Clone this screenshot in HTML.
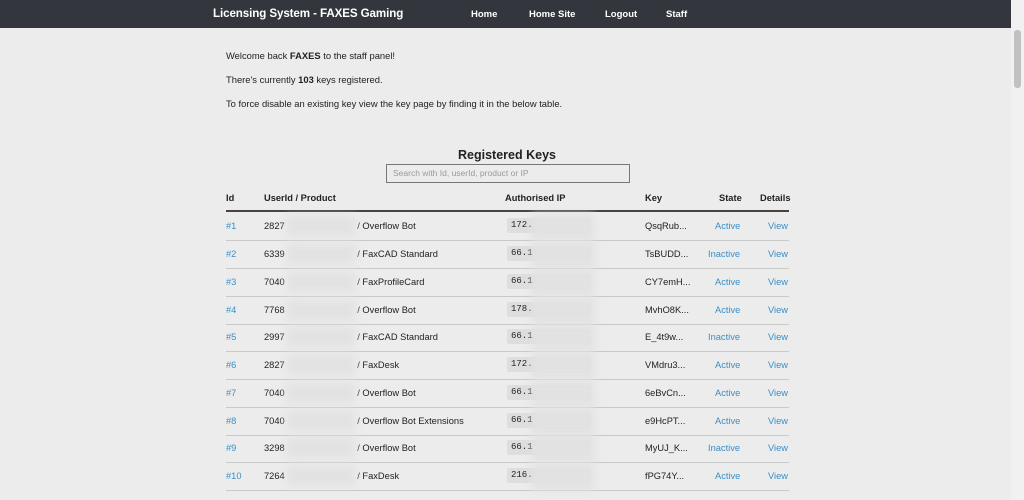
<!DOCTYPE html>
<html><head><style>
body{margin:0;width:1024px;height:500px;overflow:hidden;background:#ececec;font-family:"Liberation Sans",sans-serif;color:#222;font-size:9.3px;position:relative}
.nav{position:absolute;left:0;top:0;width:1011px;height:28px;background:#33373d;color:#fff}
.nav .t{position:absolute;left:213px;top:7px;font-size:11.6px;font-weight:bold;letter-spacing:-0.1px}
.nav a{position:absolute;top:9px;font-size:9.5px;font-weight:bold;color:#fff}
.sb{position:absolute;right:0;top:0;width:13px;height:500px;background:#f1f1f1}
.sb div{position:absolute;left:3px;top:30px;width:7px;height:58px;background:#c1c1c1;border-radius:3px}
p{position:absolute;left:226px;margin:0;font-size:9.4px}
h2{position:absolute;left:0;width:1014px;text-align:center;top:148px;margin:0;font-size:12.5px;font-weight:bold}
.search{position:absolute;left:386px;top:164px;height:19px;border:1px solid #777;background:#ececec;color:#999;font-size:8.5px;line-height:17px;padding-left:6px;box-sizing:border-box;width:244px}
.th{position:absolute;top:193px;font-weight:bold;font-size:9.3px}
.hl{position:absolute;left:226px;width:563px;top:210px;height:2px;background:#444}
.row{position:absolute;left:226px;width:563px;height:28px;border-bottom:1px solid #c9c9c9}
.row span{position:absolute;top:9px}
.b{color:#3a8fc5}
.blur{position:absolute;background:#e2e2e2;filter:blur(4px)}
.ip{position:absolute;left:281px;top:6px;width:84px;height:15px;background:#dedede;border-radius:2px;font-family:"Liberation Mono",monospace;font-size:9px;line-height:15px;padding-left:4px;box-sizing:border-box}
</style></head><body>
<div class="nav"><span class="t">Licensing System - FAXES Gaming</span>
<a style="left:471px">Home</a><a style="left:529px">Home Site</a><a style="left:605px">Logout</a><a style="left:666px">Staff</a></div>
<div class="sb"><div></div></div>
<p style="top:50px">Welcome back <b>FAXES</b> to the staff panel!</p>
<p style="top:74px">There's currently <b>103</b> keys registered.</p>
<p style="top:98px">To force disable an existing key view the key page by finding it in the below table.</p>
<h2>Registered Keys</h2>
<div class="search">Search with Id, userId, product or IP</div>
<span class="th" style="left:226px">Id</span>
<span class="th" style="left:264px">UserId / Product</span>
<span class="th" style="left:505px">Authorised IP</span>
<span class="th" style="left:645px">Key</span>
<span class="th" style="left:719px">State</span>
<span class="th" style="left:760px">Details</span>
<div class="hl"></div>
<div class="row" style="top:212px"><span class="b">#1</span><span style="left:38px">2827<i style="display:inline-block;width:70px"></i> / Overflow Bot</span><div class="blur" style="left:61px;top:4px;width:68px;height:20px"></div><div class="ip">172.</div><div class="blur" style="left:306px;top:2px;width:62px;height:26px"></div><span style="left:419px">QsqRub...</span><span class="b" style="left:489px">Active</span><span class="b" style="left:542px">View</span></div>
<div class="row" style="top:240px"><span class="b">#2</span><span style="left:38px">6339<i style="display:inline-block;width:70px"></i> / FaxCAD Standard</span><div class="blur" style="left:61px;top:4px;width:68px;height:20px"></div><div class="ip">66.1</div><div class="blur" style="left:306px;top:2px;width:62px;height:26px"></div><span style="left:419px">TsBUDD...</span><span class="b" style="left:482px">Inactive</span><span class="b" style="left:542px">View</span></div>
<div class="row" style="top:268px"><span class="b">#3</span><span style="left:38px">7040<i style="display:inline-block;width:70px"></i> / FaxProfileCard</span><div class="blur" style="left:61px;top:4px;width:68px;height:20px"></div><div class="ip">66.1</div><div class="blur" style="left:306px;top:2px;width:62px;height:26px"></div><span style="left:419px">CY7emH...</span><span class="b" style="left:489px">Active</span><span class="b" style="left:542px">View</span></div>
<div class="row" style="top:296px"><span class="b">#4</span><span style="left:38px">7768<i style="display:inline-block;width:70px"></i> / Overflow Bot</span><div class="blur" style="left:61px;top:4px;width:68px;height:20px"></div><div class="ip">178.</div><div class="blur" style="left:306px;top:2px;width:62px;height:26px"></div><span style="left:419px">MvhO8K...</span><span class="b" style="left:489px">Active</span><span class="b" style="left:542px">View</span></div>
<div class="row" style="top:323px"><span class="b">#5</span><span style="left:38px">2997<i style="display:inline-block;width:70px"></i> / FaxCAD Standard</span><div class="blur" style="left:61px;top:4px;width:68px;height:20px"></div><div class="ip">66.1</div><div class="blur" style="left:306px;top:2px;width:62px;height:26px"></div><span style="left:419px">E_4t9w...</span><span class="b" style="left:482px">Inactive</span><span class="b" style="left:542px">View</span></div>
<div class="row" style="top:351px"><span class="b">#6</span><span style="left:38px">2827<i style="display:inline-block;width:70px"></i> / FaxDesk</span><div class="blur" style="left:61px;top:4px;width:68px;height:20px"></div><div class="ip">172.</div><div class="blur" style="left:306px;top:2px;width:62px;height:26px"></div><span style="left:419px">VMdru3...</span><span class="b" style="left:489px">Active</span><span class="b" style="left:542px">View</span></div>
<div class="row" style="top:379px"><span class="b">#7</span><span style="left:38px">7040<i style="display:inline-block;width:70px"></i> / Overflow Bot</span><div class="blur" style="left:61px;top:4px;width:68px;height:20px"></div><div class="ip">66.1</div><div class="blur" style="left:306px;top:2px;width:62px;height:26px"></div><span style="left:419px">6eBvCn...</span><span class="b" style="left:489px">Active</span><span class="b" style="left:542px">View</span></div>
<div class="row" style="top:407px"><span class="b">#8</span><span style="left:38px">7040<i style="display:inline-block;width:70px"></i> / Overflow Bot Extensions</span><div class="blur" style="left:61px;top:4px;width:68px;height:20px"></div><div class="ip">66.1</div><div class="blur" style="left:306px;top:2px;width:62px;height:26px"></div><span style="left:419px">e9HcPT...</span><span class="b" style="left:489px">Active</span><span class="b" style="left:542px">View</span></div>
<div class="row" style="top:434px"><span class="b">#9</span><span style="left:38px">3298<i style="display:inline-block;width:70px"></i> / Overflow Bot</span><div class="blur" style="left:61px;top:4px;width:68px;height:20px"></div><div class="ip">66.1</div><div class="blur" style="left:306px;top:2px;width:62px;height:26px"></div><span style="left:419px">MyUJ_K...</span><span class="b" style="left:482px">Inactive</span><span class="b" style="left:542px">View</span></div>
<div class="row" style="top:462px"><span class="b">#10</span><span style="left:38px">7264<i style="display:inline-block;width:70px"></i> / FaxDesk</span><div class="blur" style="left:61px;top:4px;width:68px;height:20px"></div><div class="ip">216.</div><div class="blur" style="left:306px;top:2px;width:62px;height:26px"></div><span style="left:419px">fPG74Y...</span><span class="b" style="left:489px">Active</span><span class="b" style="left:542px">View</span></div>
</body></html>
